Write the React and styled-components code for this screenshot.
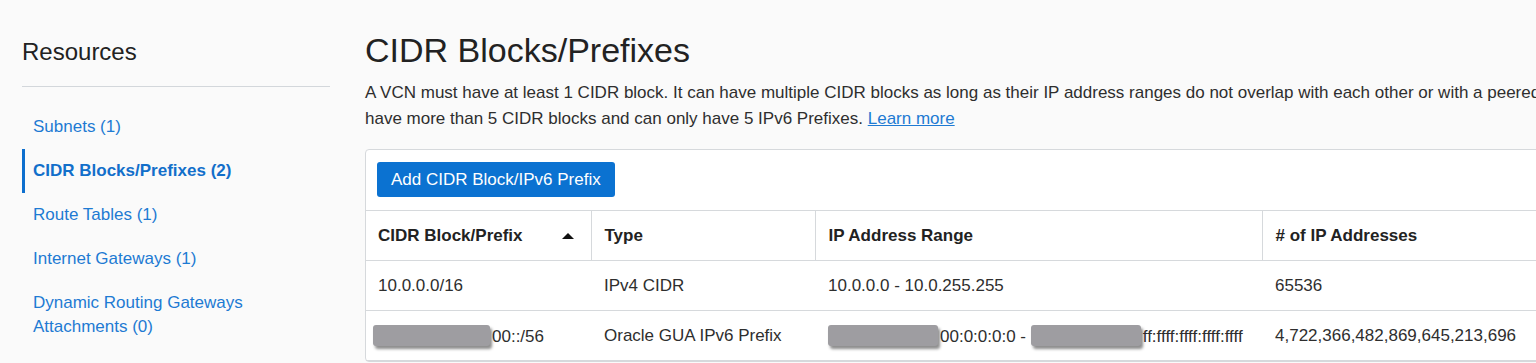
import styled, { createGlobalStyle } from "styled-components";

const GlobalStyle = createGlobalStyle`
  html, body {
    margin: 0;
    padding: 0;
    background: #fafafa;
    overflow: hidden;
  }
  body {
    font-family: "Liberation Sans", Arial, sans-serif;
    color: #2b2b2b;
  }
`;

const Page = styled.div`
  display: flex;
  gap: 35px;
  width: 1900px;
  height: 363px;
`;

const Sidebar = styled.aside`
  flex: 0 0 308px;
  padding: 38px 0 0 22px;
`;

const SideTitle = styled.h2`
  margin: 0;
  font-size: 24px;
  line-height: 28px;
  font-weight: 400;
  color: #222;
`;

const Divider = styled.hr`
  margin: 20px 0 18px;
  border: none;
  border-top: 1px solid #d3d7db;
`;

const NavList = styled.ul`
  list-style: none;
  margin: 0;
  padding: 0;
`;

const NavItem = styled.li`
  padding: 10px 0 10px 8px;
  border-left: 3px solid ${(p) => (p.$active ? "#0d6fce" : "transparent")};
  line-height: 24px;
  font-size: 17px;
  font-weight: ${(p) => (p.$active ? 700 : 400)};
  color: ${(p) => (p.$active ? "#126fca" : "#1e7ad3")};
`;

const Main = styled.main`
  flex: 1;
  padding-top: 30px;
`;

const Title = styled.h1`
  margin: 0;
  font-size: 34px;
  line-height: 40px;
  font-weight: 400;
  color: #222;
`;

const Description = styled.p`
  margin: 10px 0 17px;
  font-size: 17px;
  line-height: 26px;
  color: #2e2e2e;
  white-space: nowrap;
`;

const Link = styled.a`
  color: #1e7ad3;
  text-decoration: underline;
`;

const Card = styled.div`
  width: 1400px;
  background: #fff;
  border: 1px solid #d6d9dc;
  border-radius: 4px;
`;

const Toolbar = styled.div`
  padding: 12px 11px 13px;
`;

const PrimaryButton = styled.button`
  height: 35px;
  padding: 0 14px;
  background: #0b72d1;
  color: #fff;
  border: none;
  border-radius: 3px;
  font-family: inherit;
  font-size: 17px;
  cursor: pointer;
`;

const Table = styled.table`
  border-collapse: collapse;
  width: 100%;
  table-layout: fixed;
  font-size: 17px;
`;

const Th = styled.th`
  height: 49px;
  padding: 0 12px 0 13px;
  text-align: left;
  font-weight: 700;
  color: #222;
  border-top: 1px solid #d6d9dc;
  border-bottom: 1px solid #d6d9dc;
  &:first-child {
    padding-left: 12px;
  }
  & + & {
    border-left: 1px solid #d6d9dc;
  }
`;

const SortHead = styled.div`
  display: flex;
  justify-content: space-between;
  align-items: center;
  padding-right: 5px;
`;

const SortArrow = styled.span`
  width: 0;
  height: 0;
  border-left: 6px solid transparent;
  border-right: 6px solid transparent;
  border-bottom: 6px solid #111;
`;

const Td = styled.td`
  height: 49px;
  padding: 0 12px 0 13px;
  color: #2e2e2e;
  border-bottom: 1px solid #d6d9dc;
  white-space: nowrap;
  overflow: hidden;
  &:first-child {
    padding-left: 12px;
  }
`;

const Redacted = styled.span`
  display: inline-block;
  vertical-align: -4px;
  width: ${(p) => p.$w}px;
  height: 21px;
  margin-left: ${(p) => p.$ml || 0}px;
  margin-right: 2px;
  background: #9e9da1;
  border-radius: 3px;
  box-shadow: 2px 3px 3px rgba(0, 0, 0, 0.45);
`;

const navItems = [
  { label: "Subnets (1)" },
  { label: "CIDR Blocks/Prefixes (2)", active: true },
  { label: "Route Tables (1)" },
  { label: "Internet Gateways (1)" },
  { label: ["Dynamic Routing Gateways", "Attachments (0)"] },
];

export default function App() {
  return (
    <>
      <GlobalStyle />
      <Page>
        <Sidebar>
          <SideTitle>Resources</SideTitle>
          <Divider />
          <NavList>
            {navItems.map((item, i) => (
              <NavItem key={i} $active={item.active}>
                {Array.isArray(item.label) ? (
                  <>
                    {item.label[0]}
                    <br />
                    {item.label[1]}
                  </>
                ) : (
                  item.label
                )}
              </NavItem>
            ))}
          </NavList>
        </Sidebar>

        <Main>
          <Title>CIDR Blocks/Prefixes</Title>
          <Description>
            A VCN must have at least 1 CIDR block. It can have multiple CIDR blocks as long as
            their IP address ranges do not overlap with each other or with a peered VCN's CIDR
            blocks. A VCN cannot
            <br />
            have more than 5 CIDR blocks and can only have 5 IPv6 Prefixes.{" "}
            <Link href="#">Learn more</Link>
          </Description>

          <Card>
            <Toolbar>
              <PrimaryButton>Add CIDR Block/IPv6 Prefix</PrimaryButton>
            </Toolbar>
            <Table>
              <colgroup>
                <col style={{ width: 225 }} />
                <col style={{ width: 224 }} />
                <col style={{ width: 447 }} />
                <col />
              </colgroup>
              <thead>
                <tr>
                  <Th>
                    <SortHead>
                      CIDR Block/Prefix
                      <SortArrow />
                    </SortHead>
                  </Th>
                  <Th>Type</Th>
                  <Th>IP Address Range</Th>
                  <Th># of IP Addresses</Th>
                </tr>
              </thead>
              <tbody>
                <tr>
                  <Td>10.0.0.0/16</Td>
                  <Td>IPv4 CIDR</Td>
                  <Td>10.0.0.0 - 10.0.255.255</Td>
                  <Td>65536</Td>
                </tr>
                <tr>
                  <Td>
                    <Redacted $w={117} $ml={-5} />
                    00::/56
                  </Td>
                  <Td>Oracle GUA IPv6 Prefix</Td>
                  <Td>
                    <Redacted $w={110} />
                    00:0:0:0:0 - <Redacted $w={110} />
                    ff:ffff:ffff:ffff:ffff
                  </Td>
                  <Td>4,722,366,482,869,645,213,696</Td>
                </tr>
              </tbody>
            </Table>
          </Card>
        </Main>
      </Page>
    </>
  );
}
